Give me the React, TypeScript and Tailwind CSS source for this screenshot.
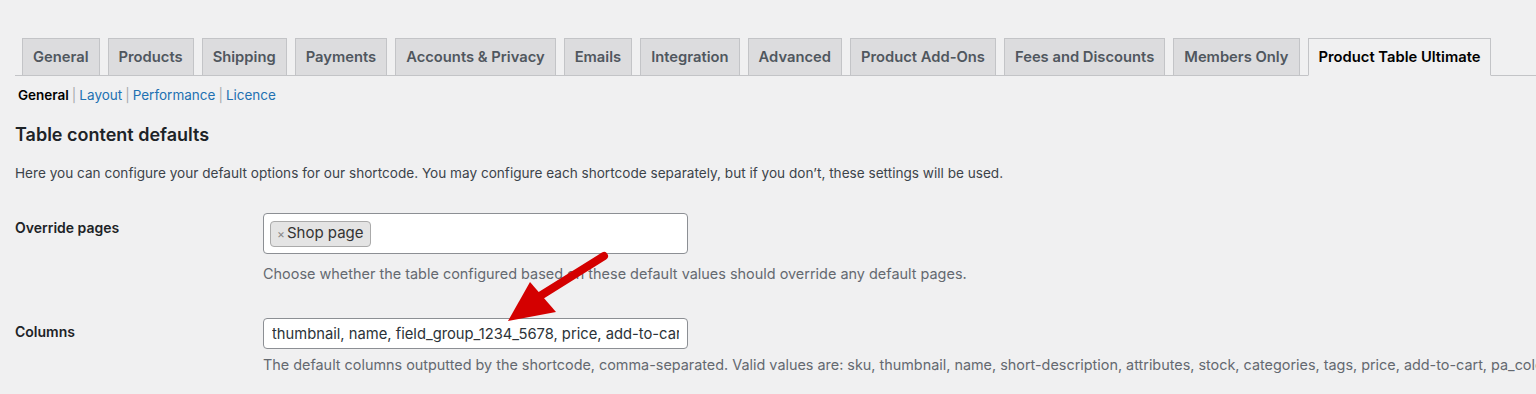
import React from 'react';

const tabs = [
  'General',
  'Products',
  'Shipping',
  'Payments',
  'Accounts & Privacy',
  'Emails',
  'Integration',
  'Advanced',
  'Product Add-Ons',
  'Fees and Discounts',
  'Members Only',
  'Product Table Ultimate',
];

const ACTIVE = 'Product Table Ultimate';

const App: React.FC = () => {
  return (
    <div className="relative min-h-screen overflow-hidden bg-[#f0f0f1] font-['Inter',sans-serif] text-[#1d2327]">
      {/* Tab bar */}
      <div className="pt-[38px] pl-[15px]">
        <div className="flex gap-[8px] border-b border-[#c3c4c7] pl-[7px]">
          {tabs.map((t) => (
            <div
              key={t}
              className={`-mb-px flex h-[38px] items-center border px-[10px] text-[14.75px] font-semibold ${
                t === ACTIVE
                  ? 'border-[#c3c4c7] border-b-[#f0f0f1] bg-[#f0f0f1] text-[#000]'
                  : 'border-[#c3c4c7] bg-[#dcdcde] text-[#50575e]'
              }`}
            >
              {t}
            </div>
          ))}
        </div>
      </div>

      <div className="pl-[15px]">
        {/* Sub nav */}
        <div className="mt-[9px] flex h-[20px] items-center pl-[3px] text-[13.5px] text-[#a7aaad]">
          <span className="font-semibold text-[#000]">General</span>
          <span className="px-[3px]">|</span>
          <span className="text-[#2271b1]">Layout</span>
          <span className="px-[3px]">|</span>
          <span className="text-[#2271b1]">Performance</span>
          <span className="px-[3px]">|</span>
          <span className="text-[#2271b1]">Licence</span>
        </div>

        <h2 className="mt-[18px] h-[24px] text-[18px] leading-[24px] font-semibold text-[#1d2327]">
          Table content defaults
        </h2>

        <p className="mt-[16px] h-[20px] whitespace-nowrap text-[13.6px] leading-[20px] text-[#3c434a]">
          Here you can configure your default options for our shortcode. You may configure each shortcode
          separately, but if you don’t, these settings will be used.
        </p>

        {/* Override pages */}
        <div className="mt-[30px] flex">
          <div className="w-[248px] shrink-0 pt-[5px] text-[14px] leading-[20px] font-semibold text-[#1d2327]">
            Override pages
          </div>
          <div className="min-w-0">
            <div className="flex h-[41px] w-[425px] items-center rounded-[4px] border border-[#8c8f94] bg-white px-[6px]">
              <span className="flex h-[26px] items-center rounded-[4px] border border-[#aaa] bg-[#e4e4e4] pr-[6px] pl-[6px] text-[15px] text-[#333]">
                <span className="mr-[2px] text-[12px] text-[#888]">×</span>Shop page
              </span>
            </div>
            <p className="mt-[10px] h-[20px] whitespace-nowrap text-[14.45px] leading-[20px] text-[#646970]">
              Choose whether the table configured based on these default values should override any default
              pages.
            </p>
          </div>
        </div>

        {/* Columns */}
        <div className="mt-[34px] flex">
          <div className="w-[248px] shrink-0 pt-[4px] text-[14px] leading-[20px] font-semibold text-[#1d2327]">
            Columns
          </div>
          <div className="min-w-0">
            <input
              readOnly
              value="thumbnail, name, field_group_1234_5678, price, add-to-cart"
              className="block h-[31px] w-[425px] rounded-[4px] border border-[#8c8f94] bg-white px-[8px] text-[14.75px] text-[#2c3338] outline-none"
            />
            <p className="mt-[6px] h-[20px] whitespace-nowrap text-[14.4px] leading-[20px] text-[#646970]">
              The default columns outputted by the shortcode, comma-separated. Valid values are: sku, thumbnail,
              name, short-description, attributes, stock, categories, tags, price, add-to-cart, pa_color
            </p>
          </div>
        </div>
      </div>

      {/* Red annotation arrow */}
      <svg
        className="pointer-events-none absolute top-0 left-0"
        width="1536"
        height="394"
        viewBox="0 0 1536 394"
      >
        <line x1="604" y1="256" x2="540" y2="296" stroke="#d40000" strokeWidth="8" strokeLinecap="round" />
        <polygon points="508,321 530,282 556,312" fill="#d40000" />
      </svg>
    </div>
  );
};

export default App;
